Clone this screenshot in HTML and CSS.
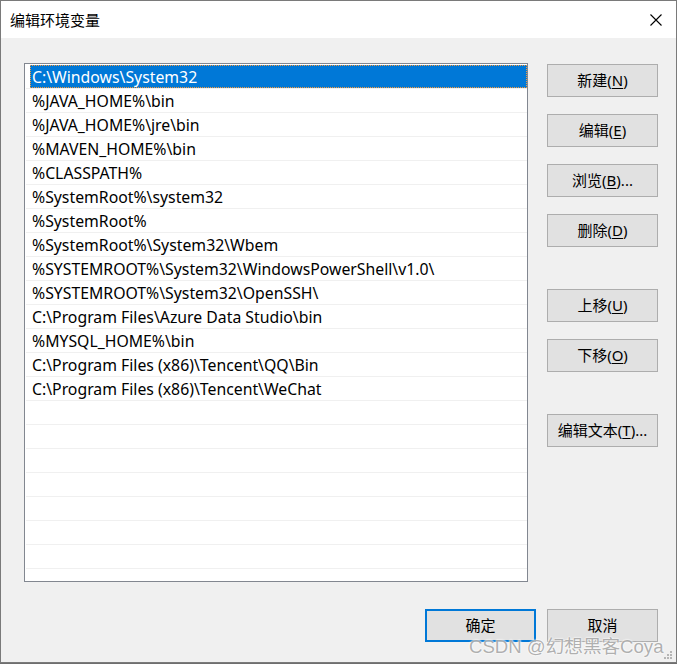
FILE: index.html
```html
<!DOCTYPE html>
<html lang="zh">
<head>
    <meta charset="UTF-8">
    <meta name="viewport" content="width=device-width, initial-scale=1.0">
    <title>编辑环境变量</title>
    <link rel="stylesheet" href="styles.css">
</head>
<body>
    <div class="window">
        <div class="titlebar">
            <span class="title">编辑环境变量</span>
            <svg class="close" width="12" height="12" viewBox="0 0 12 12">
                <path d="M0.5 0.5 L11.5 11.5 M11.5 0.5 L0.5 11.5" stroke="#000" stroke-width="1.1" fill="none"/>
            </svg>
        </div>
        <div class="content">
            <div class="main">
                <div class="list">
                    <div class="row"><span class="item selected">C:\Windows\System32</span></div>
                    <div class="row"><span class="item">%JAVA_HOME%\bin</span></div>
                    <div class="row"><span class="item">%JAVA_HOME%\jre\bin</span></div>
                    <div class="row"><span class="item">%MAVEN_HOME%\bin</span></div>
                    <div class="row"><span class="item">%CLASSPATH%</span></div>
                    <div class="row"><span class="item">%SystemRoot%\system32</span></div>
                    <div class="row"><span class="item">%SystemRoot%</span></div>
                    <div class="row"><span class="item">%SystemRoot%\System32\Wbem</span></div>
                    <div class="row"><span class="item">%SYSTEMROOT%\System32\WindowsPowerShell\v1.0\</span></div>
                    <div class="row"><span class="item">%SYSTEMROOT%\System32\OpenSSH\</span></div>
                    <div class="row"><span class="item">C:\Program Files\Azure Data Studio\bin</span></div>
                    <div class="row"><span class="item">%MYSQL_HOME%\bin</span></div>
                    <div class="row"><span class="item">C:\Program Files (x86)\Tencent\QQ\Bin</span></div>
                    <div class="row"><span class="item">C:\Program Files (x86)\Tencent\WeChat</span></div>
                    <div class="row"></div>
                    <div class="row"></div>
                    <div class="row"></div>
                    <div class="row"></div>
                    <div class="row"></div>
                    <div class="row"></div>
                    <div class="row"></div>
                </div>
                <div class="side">
                    <button class="btn">新建(<u>N</u>)</button>
                    <button class="btn">编辑(<u>E</u>)</button>
                    <button class="btn">浏览(<u>B</u>)...</button>
                    <button class="btn">删除(<u>D</u>)</button>
                    <button class="btn group">上移(<u>U</u>)</button>
                    <button class="btn">下移(<u>O</u>)</button>
                    <button class="btn group">编辑文本(<u>T</u>)...</button>
                </div>
            </div>
            <div class="footer">
                <button class="btn default">确定</button>
                <button class="btn">取消</button>
            </div>
        </div>
        <div class="watermark">CSDN @幻想黑客Coya</div>
        <svg class="grip" width="9" height="9" viewBox="0 0 9 9">
            <rect x="6" y="0" width="2" height="2" fill="#b5b5b5"/>
            <rect x="3" y="3" width="2" height="2" fill="#b5b5b5"/>
            <rect x="6" y="3" width="2" height="2" fill="#b5b5b5"/>
            <rect x="0" y="6" width="2" height="2" fill="#b5b5b5"/>
            <rect x="3" y="6" width="2" height="2" fill="#b5b5b5"/>
            <rect x="6" y="6" width="2" height="2" fill="#b5b5b5"/>
        </svg>
    </div>
</body>
</html>
```

FILE: styles.css
```css
body {
    margin: 0;
    background-color: #6e6e6e;
    font-family: "Noto Sans", "Noto Sans CJK SC", sans-serif;
    font-size: 15px;
    color: #000;
}
.window {
    position: relative;
    width: 677px;
    height: 663px;
    box-sizing: border-box;
    border: 1px solid #7a7a7a;
    background-color: #f0f0f0;
    display: flex;
    flex-direction: column;
}
.titlebar {
    height: 37px;
    background-color: #fff;
    display: flex;
    align-items: center;
    justify-content: space-between;
    padding: 0 14px 0 9px;
    flex-shrink: 0;
}
.title {
    font-family: "Noto Sans CJK SC", sans-serif;
    font-size: 15px;
    line-height: 1;
}
.content {
    flex: 1;
    padding: 25px 18px 20px 23px;
    display: flex;
    flex-direction: column;
}
.main {
    display: flex;
    gap: 19px;
}
.list {
    width: 504px;
    height: 519px;
    box-sizing: border-box;
    border: 1px solid #828790;
    background-color: #fff;
    padding: 1px 0 0 1px;
    overflow: hidden;
}
.row {
    height: 23px;
    border-bottom: 1px solid #f0f0f0;
    display: flex;
}
.item {
    flex: 1;
    margin-left: 4px;
    padding-left: 2px;
    font-size: 15.8px;
    line-height: 24px;
    white-space: nowrap;
}
.item.selected {
    background-color: #0078d7;
    color: #fff;
    outline: 1px dotted #f39a3e;
    outline-offset: -1px;
}
.side {
    display: flex;
    flex-direction: column;
    gap: 17px;
    padding-top: 1px;
}
.btn {
    width: 111px;
    height: 33px;
    box-sizing: border-box;
    border: 1px solid #adadad;
    background-color: #e1e1e1;
    font-family: "Noto Sans", "Noto Sans CJK SC", sans-serif;
    font-size: 15px;
    line-height: 20px;
    color: #000;
    padding: 0 0 2px;
}
.btn u {
    text-underline-offset: 2px;
}
.btn.group {
    margin-top: 25px;
}
.btn.default {
    border: 2px solid #0078d7;
}
.footer {
    display: flex;
    justify-content: flex-end;
    gap: 11px;
    margin-top: 27px;
}
.watermark {
    position: absolute;
    left: 468px;
    top: 630px;
    font-family: "Liberation Sans", "Noto Sans CJK SC", sans-serif;
    font-size: 18.6px;
    color: rgba(150, 150, 150, 0.75);
    text-shadow: 0 0 2px #fff, 0 0 2px #fff;
    white-space: nowrap;
}
.grip {
    position: absolute;
    right: 3px;
    bottom: 2px;
}
```
